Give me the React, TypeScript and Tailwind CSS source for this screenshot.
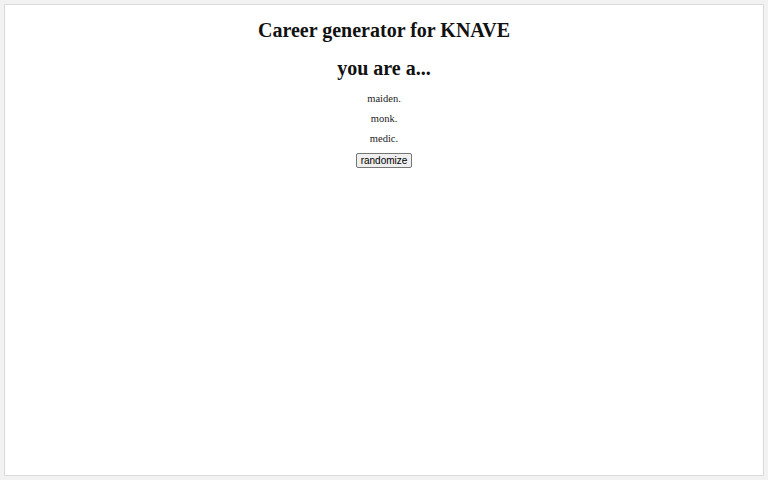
export default function App() {
  const careers = ["maiden.", "monk.", "medic."];
  return (
    <div className="h-[480px] w-[768px] bg-[#f2f2f2] p-[4px]">
      <div className="h-full w-full border border-[#dadada] bg-white flex flex-col items-center font-['Liberation_Serif',serif]">
        <h1 className="mt-[12px] text-[20px] leading-[26px] font-bold text-[#111]">
          Career generator for KNAVE
        </h1>
        <h2 className="mt-[12px] text-[20px] leading-[26px] font-bold text-[#111]">
          you are a...
        </h2>
        <div className="mt-[11px] flex flex-col items-center gap-[7px] text-[10.5px] leading-[13px] text-[#222]">
          {careers.map((c) => (
            <p key={c}>{c}</p>
          ))}
        </div>
        <button className="mt-[8px] h-[15px] px-[4px] border border-[#767676] rounded-[2px] bg-[#efefef] text-[10px] leading-[12px] text-black font-['Liberation_Sans',Arial,sans-serif]">
          randomize
        </button>
      </div>
    </div>
  );
}
